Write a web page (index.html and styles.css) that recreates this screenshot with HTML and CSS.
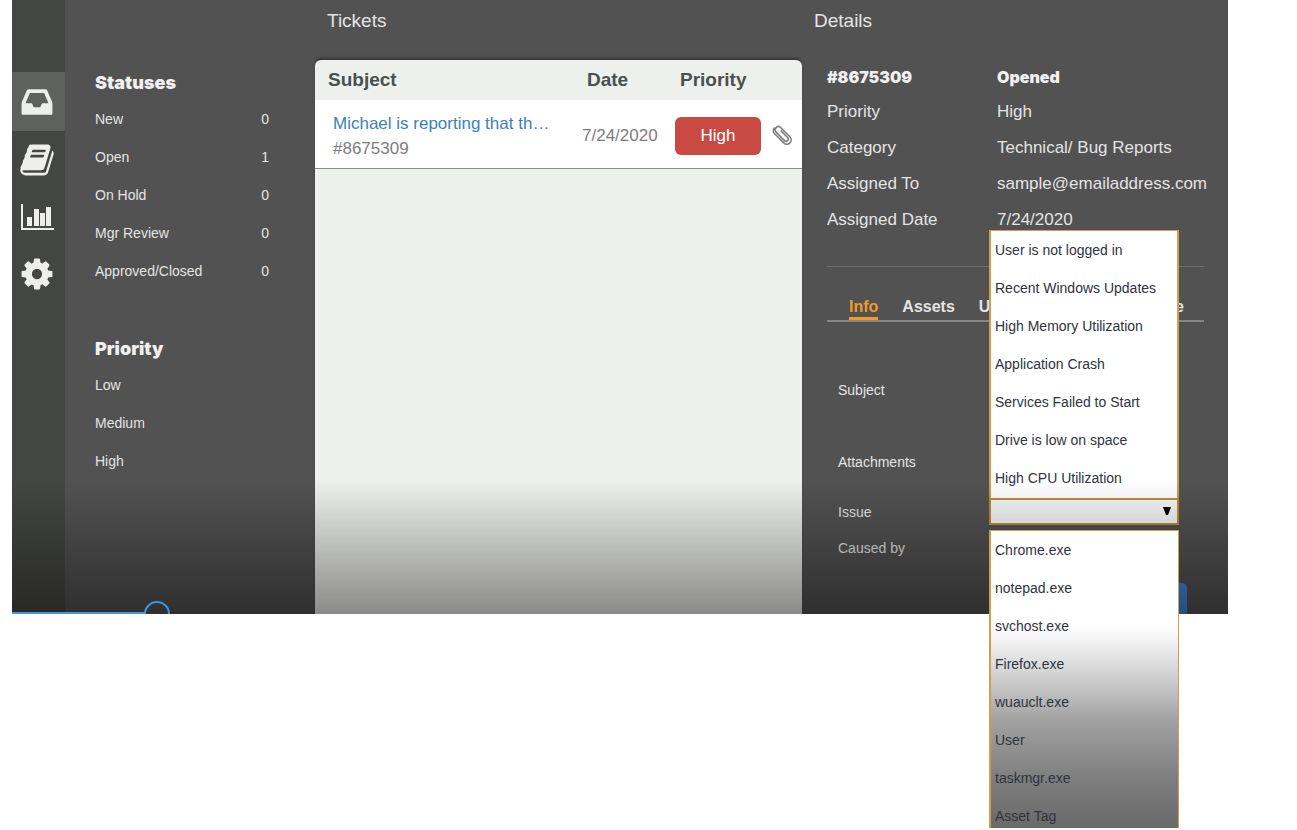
FILE: index.html
```html
<!DOCTYPE html>
<html lang="en">
<head>
    <meta charset="UTF-8">
    <meta name="viewport" content="width=device-width, initial-scale=1.0">
    <title>Tickets</title>
    <link rel="stylesheet" href="styles.css">
</head>
<body>

<div class="app">

    <!-- Icon Rail -->
    <nav class="rail">
        <a href="#" class="active" aria-label="Inbox">
            <svg viewBox="0 0 1792 1792"><path d="M1151 960h316q-1-3-2.500-8t-2.500-8l-212-496h-708l-212 496q-1 2-2.500 8t-2.500 8h316l95 192h320zm513 30v482q0 26-19 45t-45 19h-1408q-26 0-45-19t-19-45v-482q0-62 25-123l238-552q10-25 36.500-42t52.500-17h832q26 0 52.500 17t36.500 42l238 552q25 61 25 123z"/></svg>
        </a>
        <a href="#" aria-label="Knowledge base">
            <svg viewBox="0 0 1792 1792"><path d="M1703 478q40 57 18 129l-275 906q-19 64-76.500 107.500t-122.500 43.500h-923q-77 0-148.500-53.500t-99.500-131.500q-24-67-2-127 0-4 3-27t4-37q1-8-3-21.500t-3-19.500q2-11 8-21t16.500-23.500 16.500-23.500q23-38 45-91.500t30-91.500q3-10 .5-30t-.5-28q3-11 17-28t17-23q21-36 42-92t25-90q1-9-2.500-32t.5-28q4-13 22-30.500t22-22.500q19-26 42.500-84.500t27.500-96.500q1-8-3-25.500t-2-26.500q2-8 9-18t18-23 17-21q8-12 16.500-30.500t15-35 16-36 19.500-32 26.500-23.500 36-11.500 47.500 5.500l-1 3q38-9 51-9h761q74 0 114 56t18 130l-274 906q-36 119-71.500 153.500t-128.500 34.500h-869q-27 0-38 15-11 16-1 43 24 70 144 70h923q29 0 56-15.500t35-41.500l300-987q7-22 5-57 38 15 59 43zm-1064 2q-4 13 2 22.500t20 9.500h608q13 0 25.500-9.500t16.500-22.500l21-64q4-13-2-22.500t-20-9.500h-608q-13 0-25.500 9.500t-16.500 22.500zm-83 256q-4 13 2 22.500t20 9.500h608q13 0 25.500-9.500t16.500-22.500l21-64q4-13-2-22.500t-20-9.500h-608q-13 0-25.500 9.500t-16.500 22.500z"/></svg>
        </a>
        <a href="#" aria-label="Reports">
            <svg viewBox="0 0 36 36"><path d="M2 5h2v24h31v2H2zM8 18h5v9H8zM15 10h5v17h-5zM21 14h5v13h-5zM27 8h5v19h-5z"/></svg>
        </a>
        <a href="#" aria-label="Settings">
            <svg viewBox="0 0 1792 1792"><path d="M1152 896q0-106-75-181t-181-75-181 75-75 181 75 181 181 75 181-75 75-181zm512-109v222q0 12-8 23t-20 13l-185 28q-19 54-39 91 35 50 107 138 10 12 10 25t-9 23q-27 37-99 108t-94 71q-12 0-26-9l-138-108q-44 23-91 38-16 136-29 186-7 28-36 28h-222q-14 0-24.500-8.500t-11.500-21.500l-28-184q-49-16-90-37l-141 107q-10 9-25 9-14 0-25-11-126-114-165-168-7-10-7-23 0-12 8-23 15-21 51-66.500t54-70.500q-27-50-41-99l-183-27q-13-2-21-12.500t-8-23.500v-222q0-12 8-23t19-13l186-28q14-46 39-92-40-57-107-138-10-12-10-24 0-10 9-23 26-36 98.500-107.500t94.500-71.500q13 0 26 10l138 107q44-23 91-38 16-136 29-186 7-28 36-28h222q14 0 24.500 8.500t11.500 21.500l28 184q49 16 90 37l142-107q9-9 24-9 13 0 25 10 129 119 165 170 7 8 7 22 0 12-8 23-15 21-51 66.500t-54 70.500q26 50 41 98l183 28q13 2 21 12.500t8 23.500z"/></svg>
        </a>
    </nav>

    <!-- Filters -->
    <aside class="filters">
        <h3>Statuses</h3>
        <ul>
            <li><a href="#">New</a><span>0</span></li>
            <li><a href="#">Open</a><span>1</span></li>
            <li><a href="#">On Hold</a><span>0</span></li>
            <li><a href="#">Mgr Review</a><span>0</span></li>
            <li><a href="#">Approved/Closed</a><span>0</span></li>
        </ul>
        <h3>Priority</h3>
        <ul>
            <li><a href="#">Low</a></li>
            <li><a href="#">Medium</a></li>
            <li><a href="#">High</a></li>
        </ul>
    </aside>

    <!-- Ticket List -->
    <main class="tickets">
        <h2>Tickets</h2>
        <div class="panel">
            <table>
                <thead>
                    <tr>
                        <th class="col-subject">Subject</th>
                        <th class="col-date">Date</th>
                        <th class="col-priority">Priority</th>
                        <th class="col-clip"></th>
                    </tr>
                </thead>
                <tbody>
                    <tr>
                        <td class="subject"><a href="#">Michael is reporting that th…</a><br>#8675309</td>
                        <td>7/24/2020</td>
                        <td><button type="button" class="badge">High</button></td>
                        <td class="clip">
                            <svg viewBox="0 0 24 24"><path transform="rotate(-45 12 12)" d="M8 7v10a4 4 0 0 0 8 0V5a3 3 0 0 0-6 0v11a2 2 0 0 0 4 0V7M8 7V5a4 4 0 0 1 4-4"/></svg>
                        </td>
                    </tr>
                </tbody>
            </table>
        </div>
    </main>

    <!-- Ticket Details -->
    <section class="details">
        <h2>Details</h2>
        <div class="details-body">
            <dl>
                <dt class="strong">#8675309</dt><dd class="strong">Opened</dd>
                <dt>Priority</dt><dd>High</dd>
                <dt>Category</dt><dd>Technical/ Bug Reports</dd>
                <dt>Assigned To</dt><dd>sample@emailaddress.com</dd>
                <dt>Assigned Date</dt><dd>7/24/2020</dd>
            </dl>
            <nav class="tabs">
                <a href="#" class="active">Info</a>
                <a href="#">Assets</a>
                <a href="#">User</a>
                <a href="#" class="last">Remote</a>
            </nav>
            <form>
                <div class="row tall"><span>Subject</span></div>
                <div class="row tall"><span>Attachments</span></div>
                <div class="row">
                    <label for="issue">Issue</label>
                    <div class="field">
                        <select id="issue"><option></option></select>
                        <svg class="arrow" viewBox="0 0 8 8"><path d="M0 0h8L5 8H3z"/></svg>
                        <ul class="menu menu-up">
                            <li>User is not logged in</li>
                            <li>Recent Windows Updates</li>
                            <li>High Memory Utilization</li>
                            <li>Application Crash</li>
                            <li>Services Failed to Start</li>
                            <li>Drive is low on space</li>
                            <li>High CPU Utilization</li>
                        </ul>
                    </div>
                </div>
                <div class="row">
                    <label for="cause">Caused by</label>
                    <div class="field">
                        <select id="cause"><option></option></select>
                        <ul class="menu menu-down">
                            <li>Chrome.exe</li>
                            <li>notepad.exe</li>
                            <li>svchost.exe</li>
                            <li>Firefox.exe</li>
                            <li>wuauclt.exe</li>
                            <li>User</li>
                            <li>taskmgr.exe</li>
                            <li>Asset Tag</li>
                        </ul>
                    </div>
                </div>
                <button type="button" class="save" aria-label="Save"></button>
            </form>
        </div>
    </section>

    <!-- Player shade and progress -->
    <div class="shade">
        <div class="progress"></div>
        <div class="handle"></div>
    </div>
</div>

</body>
</html>
```
FILE: styles.css
```css
* {
    box-sizing: border-box;
}

body {
    font-family: 'Liberation Sans', Arial, sans-serif;
    font-size: 14px;
    min-height: 100vh;
    margin: 0;
    padding: 0 69px 0 12px;
    background: #fff;
    color: #e4e4e4;
}

h2, h3, ul, dl, dd {
    margin: 0;
    padding: 0;
}

ul {
    list-style: none;
}

a {
    color: inherit;
    text-decoration: none;
}

.app {
    position: relative;
    display: grid;
    grid-template-columns: 53px 250px minmax(0, 487fr) minmax(0, 426fr);
    background: #525252;
}

/* Icon rail */
.rail {
    background: #444643;
    padding-top: 72px;
}

.rail a {
    display: flex;
    align-items: center;
    justify-content: center;
    height: 57px;
    padding-right: 4px;
}

.rail a.active {
    height: 59px;
    background: #5e615e;
}

.rail svg {
    width: 36px;
    height: 36px;
    fill: #eeeeec;
}

/* Filters */
.filters {
    padding: 66px 46px 0 30px;
}

.filters h3 {
    font-family: Inter, sans-serif;
    font-size: 18px;
    font-weight: 900;
    line-height: 34px;
    color: #f0f0f0;
}

.filters ul {
    margin-bottom: 42px;
}

.filters li {
    display: flex;
    justify-content: space-between;
    line-height: 38px;
}

h2 {
    font-size: 19px;
    font-weight: normal;
    line-height: 42px;
    padding: 0 12px 18px;
}

/* Ticket list */
.tickets {
    display: flex;
    flex-direction: column;
}

.panel {
    flex: 1;
    background: #eef0ed;
    border-radius: 6px 6px 0 0;
    box-shadow: 0 -3px 3px -1px #333;
    overflow: hidden;
}

table {
    width: 100%;
    table-layout: fixed;
    border-collapse: collapse;
    color: #7d7d7d;
    font-size: 17px;
}

th {
    height: 40px;
    padding: 0 0 0 5px;
    font-size: 19px;
    text-align: left;
    color: #4a4f50;
}

th.col-subject {
    padding-left: 13px;
}

.col-date,
.col-priority {
    width: 93px;
}

.col-clip {
    width: 34px;
}

td {
    height: 68px;
    padding: 4px 0 0;
    background: #fff;
    border-bottom: 1px solid #8c8c8c;
}

td.subject {
    padding-left: 18px;
    line-height: 25px;
}

td.subject a {
    color: #4080b8;
}

.badge {
    display: block;
    width: 86px;
    height: 38px;
    border: none;
    border-radius: 6px;
    background: #c84a43;
    color: #fff;
    font-family: inherit;
    font-size: 17px;
}

td.clip {
    padding-left: 2px;
}

.clip svg {
    display: block;
    width: 26px;
    height: 26px;
    fill: none;
    stroke: #808080;
    stroke-width: 1.5;
}

/* Details */
.details-body {
    padding: 0 24px 0 25px;
}

dl {
    display: grid;
    grid-template-columns: 170px 1fr;
    padding-bottom: 28px;
    border-bottom: 1px solid #6b6b6b;
    font-size: 17px;
    line-height: 36px;
}

dl .strong {
    font-family: Inter, sans-serif;
    font-size: 16px;
    font-weight: 900;
    line-height: 34px;
    color: #f0f0f0;
}

.tabs {
    display: flex;
    gap: 24px;
    margin-top: 30px;
    padding: 0 20px 0 22px;
    border-bottom: 2px solid #858585;
    font-size: 16px;
    font-weight: bold;
    line-height: 20px;
}

.tabs a {
    border-bottom: 3px solid transparent;
}

.tabs a.active {
    color: #f09a2c;
    border-color: #f09a2c;
}

.tabs .last {
    margin-left: auto;
}

form {
    margin-top: 32px;
    padding-left: 11px;
}

.row {
    display: grid;
    grid-template-columns: 151px 190px;
    align-items: center;
    height: 27px;
    margin-bottom: 9px;
}

.row.tall {
    height: 72px;
    margin-bottom: 0;
}

.field {
    position: relative;
}

select {
    appearance: none;
    display: block;
    width: 100%;
    height: 27px;
    border: 2px solid #c08a34;
    border-radius: 0;
    background: #f6f9f8;
}

.arrow {
    position: absolute;
    top: 9px;
    right: 8px;
    width: 8px;
    height: 8px;
}

.menu {
    position: absolute;
    left: 0;
    width: 100%;
    background: #fff;
    border: 2px solid #cf9f50;
    color: #30333c;
}

.menu li {
    padding-left: 4px;
    line-height: 38px;
}

.menu-up {
    bottom: 100%;
    padding-bottom: 1px;
    border-width: 1px 2px 0;
}

/* drawn above the shade, cut off at the last entry */
.menu-down {
    top: -4px;
    z-index: 3;
    max-height: 298px;
    overflow: hidden;
    border-width: 1px 1px 0 2px;
    background: linear-gradient(#fff 32%, #d8d9d8 46%, #a0a1a0 64%, #7c7d7c 84%, #6a6a6a);
}

.save {
    display: block;
    width: 90px;
    height: 31px;
    margin: 22px 17px 0 auto;
    border: none;
    border-radius: 5px 5px 0 0;
    background: #3d87dc;
}

/* Shade */
.shade {
    position: absolute;
    left: 0;
    right: 0;
    bottom: 0;
    height: 134px;
    z-index: 2;
    overflow: hidden;
    background: linear-gradient(transparent, rgba(0, 0, 0, 0.42));
    pointer-events: none;
}

.progress {
    position: absolute;
    left: 0;
    bottom: 0;
    width: 134px;
    height: 2px;
    background: #3f97dc;
}

.handle {
    position: absolute;
    left: 132px;
    bottom: -13px;
    width: 26px;
    height: 26px;
    border: 2px solid #3f97dc;
    border-radius: 50%;
}
```
